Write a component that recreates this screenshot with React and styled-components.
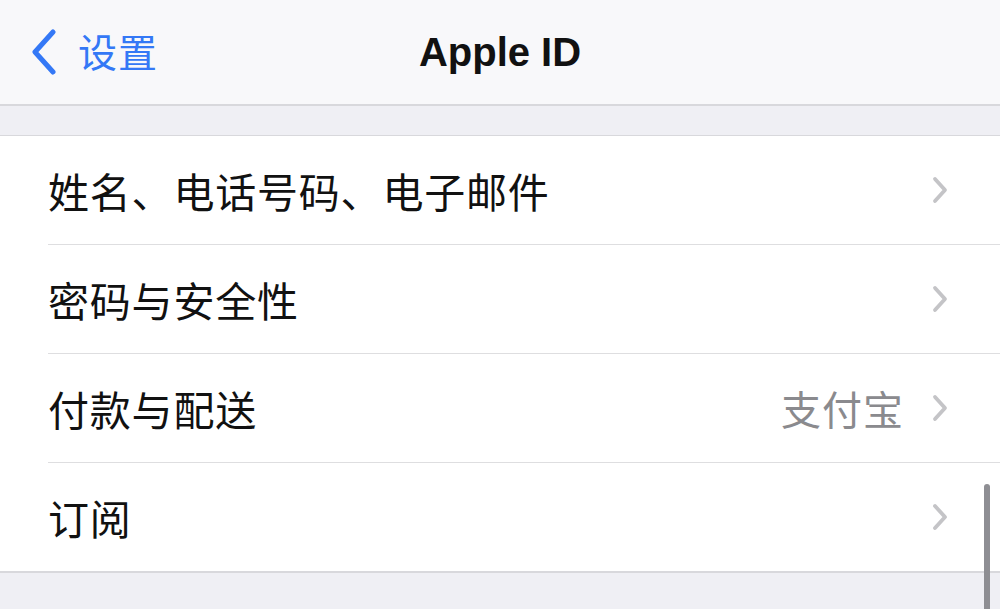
import React from "react";
import styled, { createGlobalStyle } from "styled-components";

const GlobalStyle = createGlobalStyle`
  html, body {
    margin: 0;
    padding: 0;
    background: #efeff4;
    font-family: "Noto Sans CJK SC", "Noto Sans", sans-serif;
  }
`;

const items = [
  { label: "姓名、电话号码、电子邮件" },
  { label: "密码与安全性" },
  { label: "付款与配送", detail: "支付宝" },
  { label: "订阅" },
];

function Chevron({ color, width, height, stroke }) {
  return (
    <svg width={width} height={height} viewBox="0 0 16 28" fill="none">
      <path
        d="M3 3 L13 14 L3 25"
        stroke={color}
        strokeWidth={stroke}
        strokeLinecap="round"
        strokeLinejoin="round"
      />
    </svg>
  );
}

function App() {
  return (
    <Page>
      <GlobalStyle />
      <NavBar>
        <Back>
          <BackIcon>
            <svg width="28" height="46" viewBox="0 0 28 46" fill="none">
              <path
                d="M23 3 L5 23 L23 43"
                stroke="#3478f6"
                strokeWidth="5"
                strokeLinecap="round"
                strokeLinejoin="round"
              />
            </svg>
          </BackIcon>
          <BackText>设置</BackText>
        </Back>
        <Title>Apple ID</Title>
      </NavBar>
      <Gap />
      <List>
        {items.map((item, i) => (
          <Row key={item.label} last={i === items.length - 1}>
            <Label>{item.label}</Label>
            <Right>
              {item.detail && <Detail>{item.detail}</Detail>}
              <Chevron color="#c4c4c7" width={16} height={28} stroke={3.8} />
            </Right>
          </Row>
        ))}
      </List>
      <Scrollbar />
    </Page>
  );
}

export default App;

const Page = styled.div`
  position: relative;
  width: 1000px;
  height: 609px;
  overflow: hidden;
  background: #efeff4;
`;

const NavBar = styled.div`
  position: relative;
  height: 104px;
  background: #f8f8fa;
  border-bottom: 2px solid #d8d8dc;
  display: flex;
  align-items: center;
  justify-content: center;
`;

const Back = styled.div`
  position: absolute;
  left: 30px;
  top: 0;
  bottom: 4px;
  display: flex;
  align-items: center;
  gap: 20px;
`;

const BackIcon = styled.div`
  display: flex;
  align-items: center;
  margin-top: 4px;
`;

const BackText = styled.span`
  font-size: 39px;
  color: #3478f6;
  letter-spacing: 1px;
`;

const Title = styled.h1`
  margin: 0;
  font-family: "Liberation Sans", Arial, sans-serif;
  font-size: 40px;
  font-weight: 700;
  color: #111;
`;

const Gap = styled.div`
  height: 29px;
  border-bottom: 1px solid #d8d8dc;
`;

const List = styled.div`
  background: #fff;
  padding-left: 48px;
  border-bottom: 2px solid #d8d8dc;
`;

const Row = styled.div`
  height: 108px;
  display: flex;
  align-items: center;
  justify-content: space-between;
  padding-right: 52px;
  border-bottom: ${(p) => (p.last ? "none" : "1.5px solid #dedee0")};
`;

const Label = styled.span`
  font-size: 41px;
  color: #111;
  letter-spacing: 0.8px;
`;

const Right = styled.div`
  display: flex;
  align-items: center;
  gap: 28px;
`;

const Detail = styled.span`
  font-size: 40px;
  color: #8a8a8e;
  letter-spacing: 1px;
`;

const Scrollbar = styled.div`
  position: absolute;
  right: 10px;
  top: 484px;
  width: 6px;
  height: 140px;
  border-radius: 3px;
  background: #8e8e93;
`;
